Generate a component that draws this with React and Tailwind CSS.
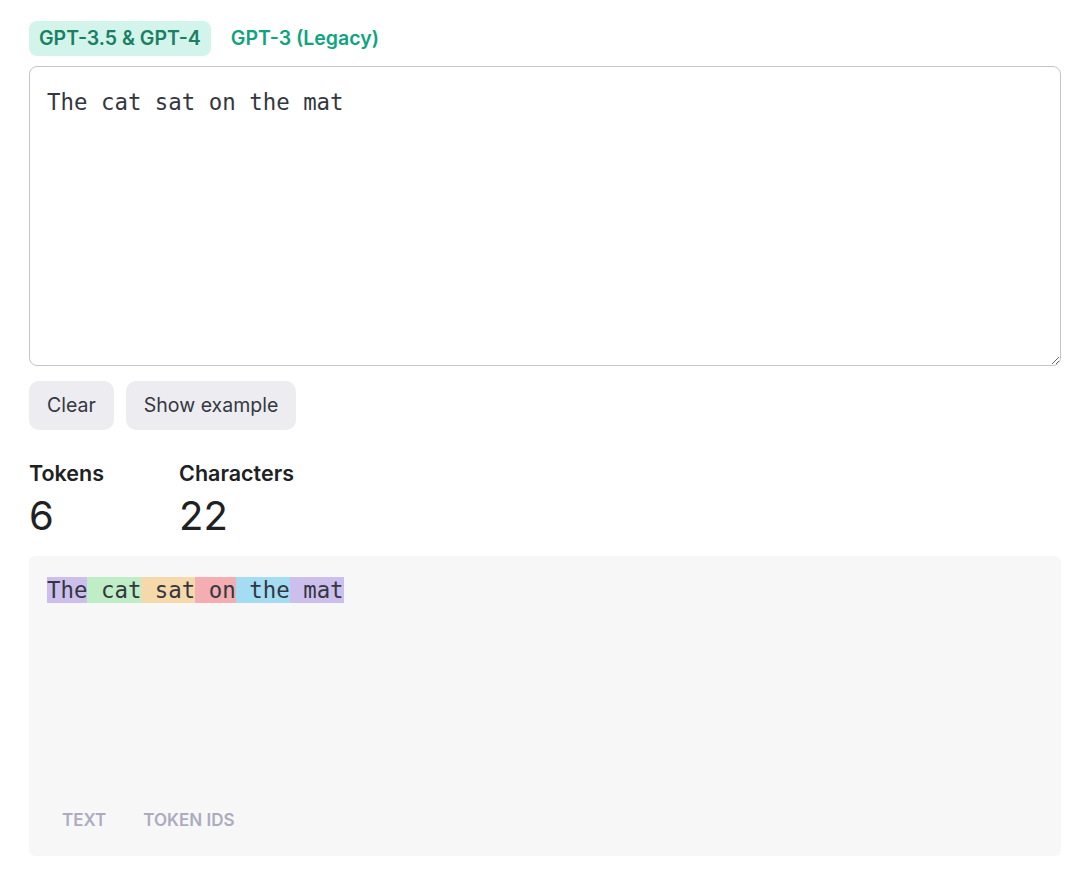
const tokens = [
  { text: 'The', color: 'bg-[rgba(107,64,216,0.3)]' },
  { text: ' cat', color: 'bg-[rgba(104,222,122,0.4)]' },
  { text: ' sat', color: 'bg-[rgba(244,172,54,0.4)]' },
  { text: ' on', color: 'bg-[rgba(239,65,70,0.4)]' },
  { text: ' the', color: 'bg-[rgba(39,181,234,0.4)]' },
  { text: ' mat', color: 'bg-[rgba(107,64,216,0.3)]' },
];

export default function App() {
  return (
    <div className="min-h-screen bg-white px-[29px] pt-[21px] font-['Inter','Liberation_Sans',sans-serif] text-[#202123]">
      {/* Model tabs */}
      <div className="flex items-center gap-[10px]">
        <button className="h-[35px] rounded-lg bg-[#d2f4ea] px-[10px] text-[19.5px] font-semibold text-[#1a7f64]">
          GPT-3.5 &amp; GPT-4
        </button>
        <button className="h-[35px] px-[10px] text-[19.5px] font-semibold text-[#10a37f]">
          GPT-3 (Legacy)
        </button>
      </div>

      {/* Input */}
      <textarea
        defaultValue="The cat sat on the mat"
        className="mt-[10px] block h-[300px] w-[1032px] rounded-lg border border-[#c5c5d2] px-[17px] py-[20px] font-['DejaVu_Sans_Mono',monospace] text-[22.4px] leading-[30px] text-[#353740] outline-none"
      />

      {/* Actions */}
      <div className="mt-[15px] flex gap-3">
        <button className="h-[49px] rounded-[10px] bg-[#ececf1] px-[18px] text-[19.5px] text-[#353740]">Clear</button>
        <button className="h-[49px] rounded-[10px] bg-[#ececf1] px-[18px] text-[19.5px] text-[#353740]">Show example</button>
      </div>

      {/* Stats */}
      <div className="mt-[29px] flex gap-[75px]">
        <div>
          <div className="text-[21.5px] font-semibold leading-[28px]">Tokens</div>
          <div className="mt-[7px] text-[40px] leading-[44px]">6</div>
        </div>
        <div>
          <div className="text-[21.5px] font-semibold leading-[28px]">Characters</div>
          <div className="mt-[7px] text-[40px] leading-[44px]">22</div>
        </div>
      </div>

      {/* Output */}
      <div className="mt-[18px] flex h-[300px] w-[1032px] flex-col justify-between rounded-md bg-[#f7f7f8] px-[18px] pb-[19px] pt-[21px]">
        <div className="flex font-['DejaVu_Sans_Mono',monospace] text-[22.4px] leading-[26px] text-[#353740]">
          {tokens.map((t, i) => (
            <span key={i} className={`whitespace-pre ${t.color}`}>{t.text}</span>
          ))}
        </div>
        <div className="flex gap-[7px] text-[17px] font-semibold text-[#acacbe]">
          <button className="px-[15px] py-1">TEXT</button>
          <button className="px-[15px] py-1">TOKEN IDS</button>
        </div>
      </div>
    </div>
  );
}
